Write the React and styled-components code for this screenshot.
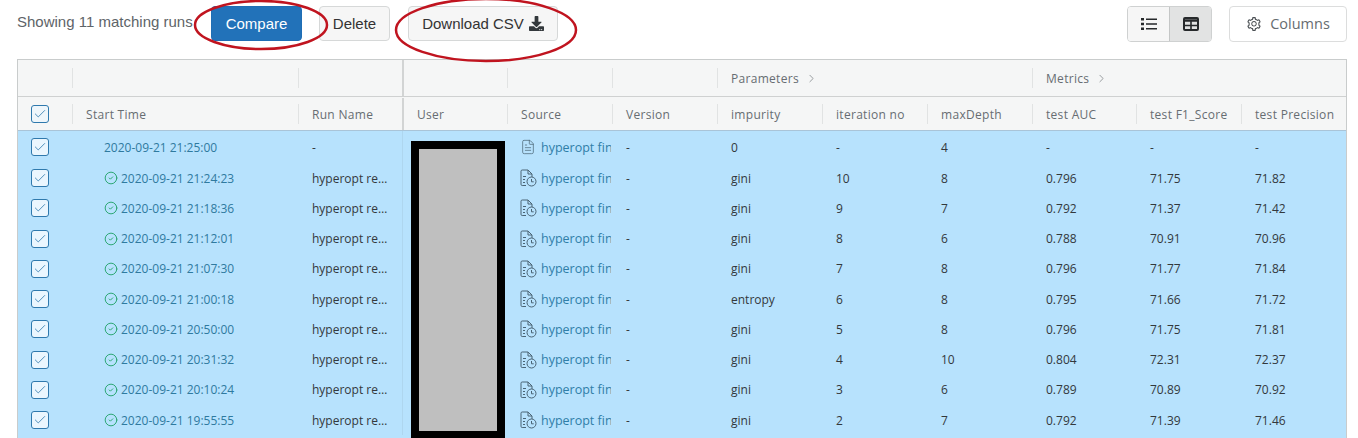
import React from 'react';
import styled, { createGlobalStyle } from 'styled-components';
import { Check, ChevronRight, CircleCheck, FileText } from 'lucide-react';
import { AiOutlineSetting } from 'react-icons/ai';
import { FaDownload } from 'react-icons/fa';

const TRACKS = '54px 226px 104px 105px 105px 105px 105px 105px 105px 104px 105px 105px';

const GlobalStyle = createGlobalStyle`
	html, body {
		margin: 0;
		height: 438px;
		overflow: hidden;
		background: #fff;
	}
`;

const Page = styled.div`
	position: relative;
	height: 438px;
	overflow: hidden;
	padding: 6px 11px 0 17px;
	box-sizing: border-box;
	font-family: "Open Sans", "Liberation Sans", sans-serif;
`;

const Toolbar = styled.div`
	display: flex;
	align-items: flex-start;
	height: 53px;
	font-family: "Liberation Sans", Arial, sans-serif;
	font-size: 15px;
`;

const Count = styled.span`
	width: 194px;
	line-height: 32px;
	color: #5e6468;
	white-space: nowrap;
`;

const Button = styled.button`
	display: flex;
	align-items: center;
	justify-content: center;
	gap: 5px;
	box-sizing: border-box;
	width: ${p => p.$width}px;
	height: 35px;
	margin-right: ${p => p.$gap || 0}px;
	padding: 0 0 1px;
	border: 1px solid ${p => (p.$primary ? '#1f6eb5' : '#d6d8d8')};
	border-radius: 4px;
	background: ${p => (p.$primary ? '#2272b9' : '#f6f6f6')};
	color: ${p => (p.$primary ? '#fff' : '#333')};
	font: inherit;
`;

const RightTools = styled.div`
	display: flex;
	margin-left: auto;
	gap: 17px;
`;

const Toggle = styled.div`
	display: flex;
	height: 36px;
	border: 1px solid #cfd1d1;
	border-radius: 4px;
	overflow: hidden;
	box-sizing: border-box;
`;

const ToggleItem = styled.div`
	display: flex;
	align-items: center;
	justify-content: center;
	width: 41px;
	background: ${p => (p.$active ? '#e2e3e3' : '#f6f6f6')};
	border-left: ${p => (p.$active ? '1px solid #c4c6c6' : 'none')};
	color: #26292b;
`;

const ColumnsButton = styled.div`
	display: flex;
	align-items: center;
	justify-content: center;
	gap: 8px;
	box-sizing: border-box;
	width: 118px;
	height: 36px;
	padding-bottom: 1px;
	border: 1px solid #dcdddd;
	border-radius: 4px;
	color: #666c70;
	font-family: "Open Sans", sans-serif;
	font-size: 14.5px;
`;

const Table = styled.div`
	border: 1px solid #c9cccc;
	border-bottom: none;
	height: 380px;
	background: #b7e2fd;
`;

const Row = styled.div`
	display: grid;
	grid-template-columns: ${TRACKS};
	align-items: center;
	box-sizing: border-box;
	height: ${p => p.$height}px;
`;

const HeadRow = styled(Row)`
	background: #f5f6f6;
	border-bottom: ${p => (p.$strong ? '1px solid #a9c4d8' : '1px solid #cfd1d1')};
	padding-top: ${p => (p.$strong ? 1 : 0)}px;
	color: #676d72;
	font-size: 12px;
	letter-spacing: 0.3px;
`;

const HeadCell = styled.div`
	display: flex;
	align-items: center;
	gap: 6px;
	height: ${p => (p.$group ? '100%' : '20px')};
	box-sizing: border-box;
	padding-left: 13px;
	white-space: nowrap;
	overflow: hidden;
	grid-column: span ${p => p.$span || 1};
	border-left: ${p => (p.$group ? '2px solid #d2d4d4' : '1px solid #e1e3e3')};
`;

const CheckCell = styled.div`
	display: flex;
	align-items: center;
	padding-left: 13px;
`;

const CheckBox = styled.div`
	display: flex;
	align-items: center;
	justify-content: center;
	box-sizing: border-box;
	width: 18px;
	height: 18px;
	border: 1.5px solid #2f79ad;
	border-radius: 3px;
	background: ${p => (p.$light ? '#eef6fb' : '#eaf6fe')};
	color: #2f79ad;
`;

const Cell = styled.div`
	padding-left: 14px;
	padding-right: 14px;
	color: #33383c;
	font-size: 12px;
	white-space: nowrap;
	overflow: hidden;
	text-overflow: ellipsis;
`;

const BlankCell = styled.div`
	align-self: stretch;
	border-left: 1px solid #aed6ef;
`;

const TimeCell = styled.div`
	display: flex;
	align-items: center;
	gap: 3px;
	padding-left: 32px;
	color: #2f7a9f;
	font-size: 12px;
	white-space: nowrap;
`;

const SourceCell = styled.div`
	display: flex;
	align-items: center;
	gap: ${p => p.$gap}px;
	padding-left: 13px;
	color: #2f7ea8;
	font-size: 12.5px;
	white-space: nowrap;
	overflow: hidden;
	margin-right: 1px;
`;

const Redacted = styled.div`
	position: absolute;
	left: 411px;
	top: 141px;
	width: 78px;
	height: 282px;
	border: 8px solid #000;
	background: #bfbfbf;
`;

const Scribble = styled.svg`
	position: absolute;
	left: 0;
	top: 0;
	pointer-events: none;
`;

const ListGlyph = () => (
	<svg width="16" height="14" viewBox="0 0 16 14">
		<path d="M0 1h3v2.4H0zM0 5.8h3v2.4H0zM0 10.6h3V13H0z" fill="currentColor" />
		<path d="M5 2.2h11M5 7h11M5 11.8h11" stroke="currentColor" strokeWidth="1.5" />
	</svg>
);

const TableGlyph = () => (
	<svg width="16" height="14" viewBox="0 0 16 14">
		<rect x="1" y="1" width="14" height="12" rx="1" fill="none" stroke="currentColor" strokeWidth="2" />
		<path d="M1 3.5h14" stroke="currentColor" strokeWidth="2.5" />
		<path d="M1 8.5h14M8 3v10" stroke="currentColor" strokeWidth="1.6" />
	</svg>
);

const FileClockGlyph = () => (
	<svg width="17" height="18" viewBox="0 0 17 18" fill="none" stroke="#4a6475" strokeWidth="1" style={{ flex: 'none' }}>
		<path d="M6 16.5H2.2A1.2 1.2 0 0 1 1 15.3V2.2A1.2 1.2 0 0 1 2.2 1H8l4 4v3" />
		<path d="M8 1v4h4" />
		<path d="M3 7.5h3M3 10.5h2M3 13.5h2" />
		<circle cx="11.5" cy="12.5" r="4.5" />
		<path d="M11.5 10v2.8h2.2" />
	</svg>
);

const runs = [
	['21:24:23', 'gini', '10', '8', '0.796', '71.75', '71.82'],
	['21:18:36', 'gini', '9', '7', '0.792', '71.37', '71.42'],
	['21:12:01', 'gini', '8', '6', '0.788', '70.91', '70.96'],
	['21:07:30', 'gini', '7', '8', '0.796', '71.77', '71.84'],
	['21:00:18', 'entropy', '6', '8', '0.795', '71.66', '71.72'],
	['20:50:00', 'gini', '5', '8', '0.796', '71.75', '71.81'],
	['20:31:32', 'gini', '4', '10', '0.804', '72.31', '72.37'],
	['20:10:24', 'gini', '3', '6', '0.789', '70.89', '70.92'],
	['19:55:55', 'gini', '2', '7', '0.792', '71.39', '71.46'],
];

const columns = ['User', 'Source', 'Version', 'impurity', 'iteration no', 'maxDepth', 'test AUC', 'test F1_Score', 'test Precision'];

const Box = ({ light }) => (
	<CheckBox $light={light}>
		<Check size={14} strokeWidth={1.4} />
	</CheckBox>
);

const App = () => (
	<Page>
		<GlobalStyle />
		<Toolbar>
			<Count>Showing 11 matching runs</Count>
			<Button $primary $width={91} $gap={17}>Compare</Button>
			<Button $width={71} $gap={18}>Delete</Button>
			<Button $width={150}>
				Download CSV <FaDownload size={15} color="#33383c" />
			</Button>
			<RightTools>
				<Toggle>
					<ToggleItem><ListGlyph /></ToggleItem>
					<ToggleItem $active><TableGlyph /></ToggleItem>
				</Toggle>
				<ColumnsButton>
					<AiOutlineSetting size={16} color="#4b5054" /> Columns
				</ColumnsButton>
			</RightTools>
		</Toolbar>
		<Table>
			<HeadRow $height={37}>
				<div />
				<HeadCell />
				<HeadCell />
				<HeadCell $group />
				<HeadCell />
				<HeadCell />
				<HeadCell $span={3}>Parameters <ChevronRight size={13} strokeWidth={1.2} /></HeadCell>
				<HeadCell $span={3}>Metrics <ChevronRight size={13} strokeWidth={1.2} /></HeadCell>
			</HeadRow>
			<HeadRow $height={34} $strong>
				<CheckCell><Box light /></CheckCell>
				<HeadCell>Start Time</HeadCell>
				<HeadCell>Run Name</HeadCell>
				{columns.map((name, i) => (
					<HeadCell key={name} $group={i === 0}>{name}</HeadCell>
				))}
			</HeadRow>
			<Row $height={32}>
				<CheckCell><Box /></CheckCell>
				<TimeCell>2020-09-21 21:25:00</TimeCell>
				<Cell>-</Cell>
				<BlankCell />
				<SourceCell $gap={5}>
					<FileText size={16} strokeWidth={1.1} color="#4a6475" style={{ flex: 'none' }} />
					hyperopt final
				</SourceCell>
				<Cell>-</Cell>
				<Cell>0</Cell>
				<Cell>-</Cell>
				<Cell>4</Cell>
				<Cell>-</Cell>
				<Cell>-</Cell>
				<Cell>-</Cell>
			</Row>
			{runs.map(([time, impurity, iteration, depth, auc, f1, precision]) => (
				<Row key={time} $height={30.25}>
					<CheckCell><Box /></CheckCell>
					<TimeCell>
						<CircleCheck size={14} strokeWidth={1.6} color="#24a36b" />
						2020-09-21 {time}
					</TimeCell>
					<Cell>hyperopt results</Cell>
					<BlankCell />
					<SourceCell $gap={4}>
						<FileClockGlyph />
						hyperopt final
					</SourceCell>
					<Cell>-</Cell>
					<Cell>{impurity}</Cell>
					<Cell>{iteration}</Cell>
					<Cell>{depth}</Cell>
					<Cell>{auc}</Cell>
					<Cell>{f1}</Cell>
					<Cell>{precision}</Cell>
				</Row>
			))}
		</Table>
		<Redacted />
		<Scribble width="1358" height="438">
			<ellipse cx="261" cy="25" rx="66" ry="24" fill="none" stroke="#c0141f" strokeWidth="2.5" />
			<ellipse cx="486" cy="30" rx="90" ry="31" fill="none" stroke="#c0141f" strokeWidth="2.5" />
		</Scribble>
	</Page>
);

export default App;
